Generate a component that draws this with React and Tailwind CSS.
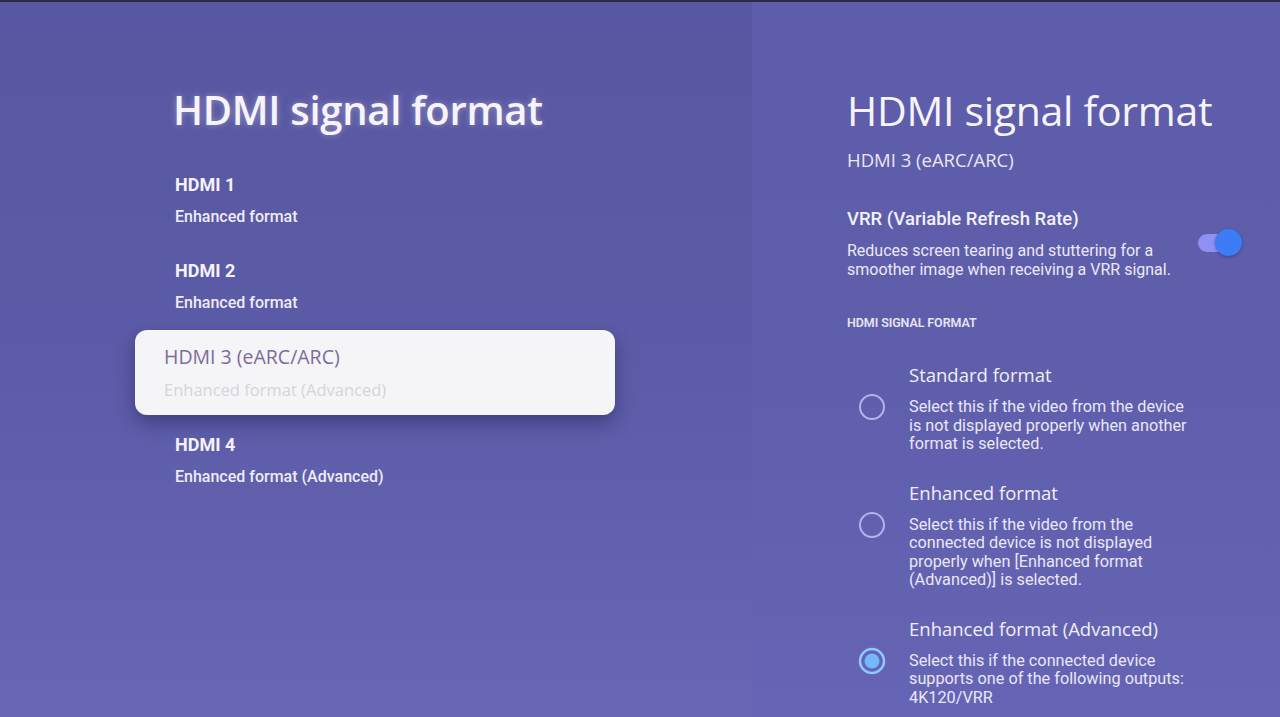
import React from 'react';

const sans = { fontFamily: 'Roboto, "Open Sans", sans-serif' };
const display = { fontFamily: '"Open Sans", Roboto, sans-serif' };

const inputs = [
  { name: 'HDMI 1', format: 'Enhanced format', cls: 'h-[86px]' },
  { name: 'HDMI 2', format: 'Enhanced format', cls: 'h-[74px]' },
  { name: 'HDMI 3 (eARC/ARC)', format: 'Enhanced format (Advanced)', focused: true },
  { name: 'HDMI 4', format: 'Enhanced format (Advanced)', cls: 'h-[86px]' },
];

const options = [
  {
    title: 'Standard format',
    lines: ['Select this if the video from the device', 'is not displayed properly when another', 'format is selected.'],
  },
  {
    title: 'Enhanced format',
    lines: ['Select this if the video from the', 'connected device is not displayed', 'properly when [Enhanced format', '(Advanced)] is selected.'],
  },
  {
    title: 'Enhanced format (Advanced)',
    lines: ['Select this if the connected device', 'supports one of the following outputs:', '4K120/VRR'],
    checked: true,
  },
];

function Radio({ checked }) {
  if (checked) {
    return (
      <svg width="28" height="28" viewBox="0 0 28 28">
        <circle cx="14" cy="14" r="12" fill="none" stroke="#8fcaff" strokeWidth="2.5" />
        <circle cx="14" cy="14" r="7.5" fill="#74b8fb" />
      </svg>
    );
  }
  return (
    <svg width="28" height="28" viewBox="0 0 28 28">
      <circle cx="14" cy="14" r="12" fill="none" stroke="#b4b2ee" strokeWidth="2" />
    </svg>
  );
}

export default function App() {
  return (
    <div className="w-[1280px] h-[717px] overflow-hidden flex border-t-2 border-[#2c2a48] text-white" style={sans}>
      {/* Left: input list */}
      <div className="w-[752px] h-full bg-gradient-to-b from-[#5857a1] via-[#5c5ba7] to-[#6767b4] pl-[135px] pt-[82px]">
        <h1 className="pl-[38px] text-[40px] leading-[52px] font-semibold tracking-[-0.3px] text-[#f6f4fa] [text-shadow:0_0_6px_rgba(255,255,255,0.35)]" style={display}>
          HDMI signal format
        </h1>
        <div className="mt-[34px] w-[480px] flex flex-col">
          {inputs.map((input) =>
            input.focused ? (
              <div
                key={input.name}
                className="h-[85px] mb-[15px] rounded-xl bg-[#f5f4f6] shadow-[0_8px_18px_rgba(30,25,80,0.45)] pl-[29px] pt-[15px]"
              >
                <p className="text-[19.5px] leading-[24px] text-[#7c6c9c]" style={display}>{input.name}</p>
                <p className="mt-[11px] text-[16.5px] leading-[20px] text-[#d6d3de]" style={display}>{input.format}</p>
              </div>
            ) : (
              <div key={input.name} className={`pl-10 pt-[3px] ${input.cls}`}>
                <p className="text-[18px] leading-[24px] font-bold text-[#f4f2fa]">{input.name}</p>
                <p className="mt-[10px] text-[16px] leading-[20px] font-medium text-[#eeecf6]">{input.format}</p>
              </div>
            )
          )}
        </div>
      </div>

      {/* Right: detail panel */}
      <div className="flex-1 h-full bg-gradient-to-b from-[#5e5dab] via-[#5f5eab] to-[#6665b5] pl-[95px] pt-[83px] pr-[36px]">
        <h2 className="text-[41px] leading-[50px] font-medium tracking-[-0.3px] text-[#f6f4fa]" style={display}>
          HDMI signal format
        </h2>
        <p className="mt-[13px] text-[18.5px] leading-[24px] text-[#e9e7f5]" style={display}>HDMI 3 (eARC/ARC)</p>

        <div className="mt-[35px] flex items-start justify-between">
          <div>
            <p className="text-[18.5px] leading-[24px] font-medium text-[#f2f0f9]">VRR (Variable Refresh Rate)</p>
            <p className="mt-[9.5px] text-[16px] leading-[19px] text-[#ebe9f6]">
              Reduces screen tearing and stuttering for a
              <br />
              smoother image when receiving a VRR signal.
            </p>
          </div>
          <div className="relative w-[46px] h-[28px] mt-[22px]">
            <div className="absolute left-0 top-[5px] w-[36px] h-[18px] rounded-full bg-[#8e90f4]" />
            <div className="absolute right-[2px] top-0 w-[27px] h-[27px] rounded-full bg-[#3c7df5] shadow-[0_1px_3px_rgba(20,20,80,0.4)]" />
          </div>
        </div>

        <p className="mt-[37.5px] text-[12.5px] leading-[14px] font-semibold text-[#e6e4f4] tracking-[-0.1px]">HDMI SIGNAL FORMAT</p>

        <div className="mt-[33px] flex flex-col gap-[27px] pl-[11px]">
          {options.map((opt) => (
            <div key={opt.title} className="flex">
              <div className="w-[51px] shrink-0 flex items-start pt-[30px]">
                <Radio checked={opt.checked} />
              </div>
              <div>
                <p className="text-[18.5px] leading-[24px] text-[#f0eef8]" style={display}>{opt.title}</p>
                <p className="mt-[11px] text-[16.25px] leading-[18.5px] text-[#e9e7f6]">
                  {opt.lines.map((l, i) => (
                    <React.Fragment key={i}>
                      {l}
                      {i < opt.lines.length - 1 && <br />}
                    </React.Fragment>
                  ))}
                </p>
              </div>
            </div>
          ))}
        </div>
      </div>
    </div>
  );
}
